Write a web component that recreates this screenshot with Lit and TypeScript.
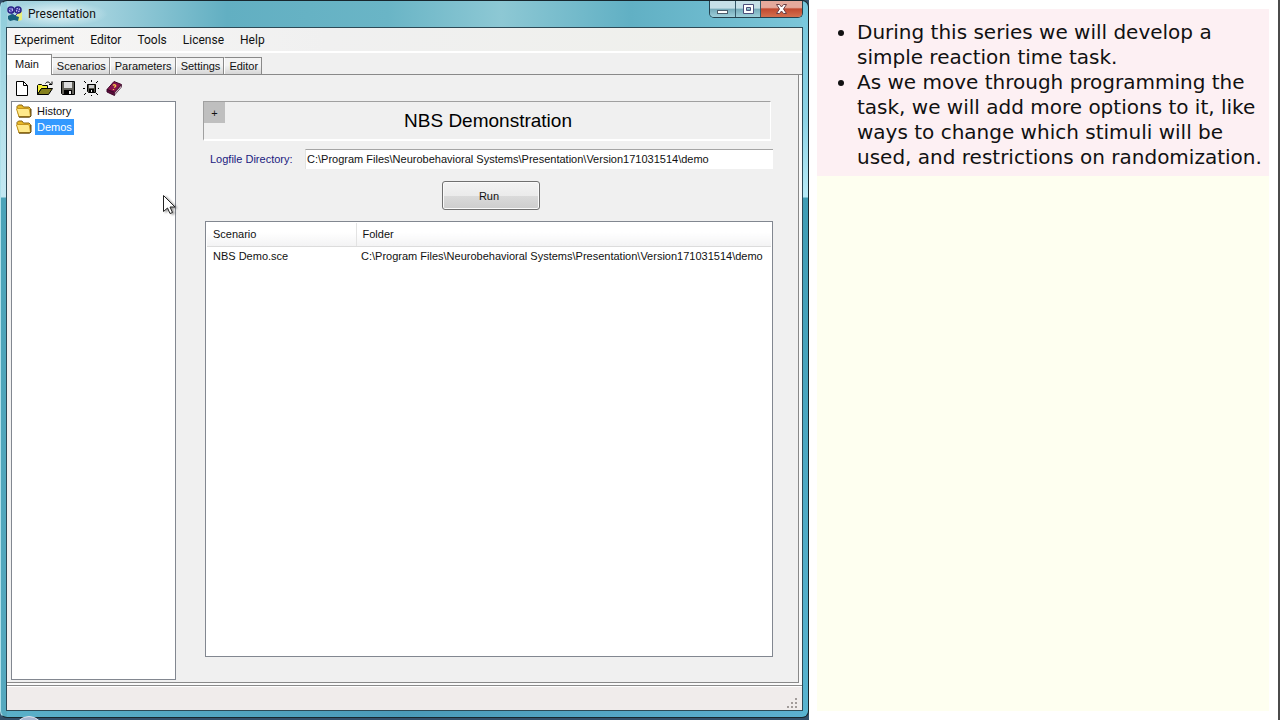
import { LitElement, html, css, svg } from "lit";
import { customElement, state } from "lit/decorators.js";
import { classMap } from "lit/directives/class-map.js";

const folderPath = "C:\\Program Files\\Neurobehavioral Systems\\Presentation\\Version171031514\\demo";

const newIcon = svg`<path d="M2.5 1.5h7l4 4v10h-11z" fill="#fff" stroke="#000"/><path d="M9.5 1.5v4h4" fill="none" stroke="#000"/>`;
const openIcon = svg`<path d="M.5 14.5v-9l1-1h3l1 1h5v3h-6z" fill="#f4f03c" stroke="#000"/><path d="M.5 14.5l4-6h11l-4 6z" fill="#85801c" stroke="#000"/><path d="M8.500 3.500c1-2 4-2 5 .5m1.500-2.500v3h-3" fill="none" stroke="#000"/>`;
const saveIcon = svg`<path d="M1.500 1.500h13v13h-12l-1-1z" fill="#62615a" stroke="#000"/><path d="M4 2h8v6H4z" fill="#dcdcdc"/><path d="M4 10h8v5H4z" fill="#000"/><path d="M9 11h2v3H9z" fill="#eee"/>`;
const saveAllIcon = svg`<path d="M4.500 4.500h8v8h-7l-1-1z" fill="#55544a" stroke="#000"/><path d="M6 5h5v3H6z" fill="#ccc"/><path d="M6 9h5v4H6z" fill="#000"/><path d="M8 10h1v2H8z" fill="#eee"/><path d="M8.500 0v2M8.500 15v1M0 8.500h2M15 8.500h1M1 1l2 2M15 1l-2 2M1 15l2-2M15 15l-2-2" stroke="#000" fill="none"/>`;
const bookIcon = svg`<path d="M1 9.500L8 1.500l7.500 3-7 8z" fill="#86144c" stroke="#3b0828"/><path d="M1 9.500l7.500 3v3L1 12z" fill="#5b0a3a" stroke="#3b0828"/><path d="M8.500 13l7-8v2l-7 8z" fill="#f2e6ea" stroke="#3b0828" stroke-width=".7"/><path d="M7 5.500c1-1.500 3.500-.5 2.500 1L8 7.500M7.500 9v1" fill="none" stroke="#f3c84a" stroke-width="1.300"/>`;

@customElement("tool-icon")
export class ToolIcon extends LitElement {
  static properties = { shape: { attribute: false } };
  declare shape: unknown;
  static styles = css`
    :host { display: block; width: 16px; height: 16px; }
    svg { display: block; width: 100%; height: 100%; }
  `;
  render() {
    return html`<svg viewBox="0 0 16 16" aria-hidden="true">${this.shape}</svg>`;
  }
}

@customElement("app-root")
export class AppRoot extends LitElement {
  @state() private selected = "Demos";

  private menus = ["Experiment", "Editor", "Tools", "License", "Help"];
  private tabs = ["Main", "Scenarios", "Parameters", "Settings", "Editor"];
  private tools = [
    { name: "New", shape: newIcon },
    { name: "Open", shape: openIcon },
    { name: "Save", shape: saveIcon },
    { name: "Save all", shape: saveAllIcon },
    { name: "Help", shape: bookIcon },
  ];

  static styles = css`
    :host {
      display: grid;
      grid-template-columns: minmax(0, 809fr) minmax(0, 471fr);
      height: 100vh;
      position: relative;
      overflow: hidden;
      font-family: "Liberation Sans", Arial, sans-serif;
      font-size: 11px;
      line-height: 16px;
      color: #111;
    }
    * { box-sizing: border-box; }
    button, input {
      font: inherit;
      color: inherit;
      margin: 0;
      padding: 0;
      border: 0;
      border-radius: 0;
      background: none;
    }
    .desktop { display: flex; flex-direction: column; background: #34506a; padding-bottom: 2px; min-height: 0; overflow: hidden; }
    .window {
      flex: 1;
      min-height: 0;
      display: flex;
      flex-direction: column;
      border: 1px solid #17262d;
      border-left-color: #aee0ea;
      border-radius: 7px;
      padding: 0 5px 6px;
      background:
        linear-gradient(#8ccbd9 0, #b7e2ec 130px, #c3e8f2 196px, #4ba3b8 197px, #55a9bf 100%) left / 6px 100% no-repeat,
        linear-gradient(#74c6dc 0, #8ed4e6 120px, #b8ebf7 196px, #3f9db5 197px, #58b4d0 100%) right / 6px 100% no-repeat,
        linear-gradient(90deg, #a5d3df 0, #a3d2de 12%, #62afc2 28%, #6ab5c6 48%, #8dc8d4 62%, #61b0c4 78%, #7cc6d9 100%) top / 100% 30px no-repeat,
        linear-gradient(90deg, #5ab0c9, #4a9ab8 50%, #5cb0d0);
    }
    .titlebar { flex: none; height: 26px; display: flex; justify-content: space-between; align-items: flex-start; }
    .caption {
      display: flex;
      align-items: center;
      gap: 5px;
      height: 26px;
      padding: 0 12px 0 1px;
      font-family: Roboto, "Open Sans", sans-serif;
      font-size: 12px;
      background: radial-gradient(closest-side, #d3ebf1 30%, transparent);
    }
    .logo { width: 16px; height: 16px; }
    .controls { display: flex; height: 17px; border: 1px solid #25424f; border-top: 0; border-radius: 0 0 5px 5px; overflow: hidden; }
    .control { width: 25px; display: grid; place-items: center; background: linear-gradient(#c5dfe7 45%, #74a9b8 50%, #9ecfda); }
    .control + .control { border-left: 1px solid #35596a; }
    .control.close { width: 42px; background: linear-gradient(#e5aa9c 40%, #c14a30 50%, #d4704e); }
    .control svg { width: 13px; height: 12px; display: block; }
    .client { flex: 1; min-height: 0; display: flex; flex-direction: column; border: 1px solid #2c4a57; background: #fafafa; }
    .menubar {
      flex: none;
      display: flex;
      gap: 16px;
      height: 25px;
      padding: 1px 7px 0;
      border-bottom: 2px solid #fff;
      background: linear-gradient(90deg, #f7f6f5, #f0f0f0 40%, #eff0eb);
      font-family: Roboto, "Open Sans", sans-serif;
      font-size: 12px;
    }
    .tabs { flex: none; display: flex; align-items: flex-end; height: 22px; padding-top: 1px; border-bottom: 1px solid #898989; background: #f0f0f0; }
    .tab {
      height: 17px;
      padding: 0 3px 0 4px;
      border: 1px solid #898989;
      border-left: 1px solid #fff;
      border-bottom: 0;
      background: linear-gradient(#f3f3f3 45%, #d6d6d6);
      white-space: nowrap;
    }
    .tab.active { height: 21px; margin-bottom: -1px; padding: 0 12px 2px 7px; background: #fff; }
    .page { flex: 1; min-height: 0; display: flex; margin-right: 3px; border: 1px solid #898989; border-width: 0 1px 1px 0; background: #f0f0f0; }
    .side { flex: none; width: 169px; display: flex; flex-direction: column; padding: 0 0 2px 4px; }
    .toolbar { flex: none; display: flex; gap: 7px; height: 26px; padding: 5px 3px; }
    .tree { flex: 1; margin: 0; padding: 1px 4px; list-style: none; border: 1px solid #828790; background: #fff; }
    .node { display: flex; align-items: center; gap: 3px; width: 100%; height: 16px; }
    .node svg { width: 16px; height: 14px; }
    .node span { padding: 0 2px; }
    .node.chosen span { background: #3399ff; color: #fff; }
    .content { flex: 1; min-width: 0; display: flex; flex-direction: column; padding: 26px 25px 25px 27px; }
    .heading { flex: none; display: grid; grid-template-columns: 22px 1fr; height: 40px; margin-right: 2px; border: 1px solid #a0a0a0; border-right-color: #fff; border-bottom: 2px solid #fff; }
    .expand { width: 21px; height: 21px; background: #bfbfbf; }
    h1 { margin: 0; padding-right: 20px; align-self: center; text-align: center; font-size: 19px; line-height: 24px; font-weight: 400; color: #000; }
    .logfile { flex: none; display: flex; align-items: center; margin-top: 8px; padding-left: 7px; }
    .logfile label { width: 95px; color: #1a1a80; }
    .logfile input { flex: 1; min-width: 0; height: 20px; padding: 0 1px 1px; border-top: 1px solid #a5a5a5; border-left: 1px solid #e2e3e0; background: #fff; }
    .run {
      flex: none;
      align-self: center;
      width: 98px;
      height: 29px;
      margin: 12px 0 11px 6px;
      padding-right: 4px;
      border: 1px solid #707070;
      border-radius: 3px;
      box-shadow: inset 0 0 0 1px #fafafa;
      background: linear-gradient(#f3f3f3 0, #ebebeb 50%, #dadada 52%, #cdcdcd);
    }
    .list { flex: 1; min-height: 0; margin-left: 2px; padding: 1px; border: 1px solid #828790; background: #fff; overflow: hidden; }
    table { width: 100%; border-collapse: collapse; table-layout: fixed; }
    th, td { height: 23px; padding: 0 6px; text-align: left; font-weight: 400; white-space: nowrap; }
    td { height: 20px; padding: 0 5px; }
    td:first-child { padding-left: 6px; }
    th { border-bottom: 1px solid #dcdcdc; background: linear-gradient(#fff 40%, #f3f3f4); }
    .name { width: 149px; border-right: 1px solid #e3e3e3; }
    .status { flex: none; height: 25px; margin-top: 2px; padding: 1px 4px; border-top: 1px solid #8a8a8a; background: #f0eceb; box-shadow: inset 0 1px #fff; display: flex; align-items: flex-end; justify-content: flex-end; }
    .grip { width: 12px; height: 12px; display: block; }
    .notes { border-right: 2px solid #4b4b4b; background: #fff; padding: 9px 9px 9px 8px; display: flex; min-width: 0; }
    .paper { flex: 1; min-width: 0; background: #fefff0; }
    .notes ul {
      margin: 0;
      padding: 11px 0 6px 40px;
      background: #fdf0f3;
      font-family: "DejaVu Sans", Verdana, sans-serif;
      font-size: 20px;
      line-height: 25px;
      color: #111;
    }
    .orb { position: absolute; left: 14px; bottom: -26px; width: 30px; height: 30px; border-radius: 50%; background: #a9b5d0; border: 1px solid #dfe6f0; }
    .pointer { position: absolute; left: 163px; top: 195px; width: 14px; height: 20px; filter: drop-shadow(2px 1px 1px #0006); }
  `;

  private folder() {
    return html`<svg viewBox="0 0 16 14" aria-hidden="true">
      <path d="M1 4V2.500L2.500 1H6l1.500 2H13l1.500 1.500V12L13 13H3z" fill="#e9b824" stroke="#8b6716"/>
      <path d="M.500 5l1-.5H12l1.500 1 1 7H3z" fill="#ffe98a" stroke="#c4951d"/>
      <path d="M3 13h11l1-1V5" fill="none" stroke="#5c4510"/>
    </svg>`;
  }

  render() {
    return html`
      <main class="desktop">
        <section class="window">
          <header class="titlebar">
            <div class="caption">
              <svg class="logo" viewBox="0 0 16 16" aria-hidden="true">
                <path d="M9 9l4-4 2 1v8l-4 1z" fill="#e7ee7c"/>
                <circle cx="4" cy="4" r="3" fill="#b9b4ee" stroke="#282184" stroke-width="1.500"/>
                <circle cx="11" cy="4" r="3" fill="#b9b4ee" stroke="#282184" stroke-width="1.500"/>
                <path d="M2 3l4 3M4 1v6M9 3l4 2M12 1l-2 6M4 7l4 3 3-3" stroke="#3c32a4" fill="none"/>
                <path d="M1 10l4-2 4 2 3 1-1 4-4-1-4 1-2-2z" fill="#17617c"/>
              </svg>
              <span>Presentation</span>
            </div>
            <div class="controls">
              <button class="control" aria-label="Minimize"><svg viewBox="0 0 13 12"><rect x="1.500" y="7.500" width="10" height="3" fill="#fff" stroke="#4b5d6b"/></svg></button>
              <button class="control" aria-label="Maximize"><svg viewBox="0 0 13 12"><path d="M1.500 1.500h10v9h-10zM4.500 4.500v3h4v-3z" fill="#fff" fill-rule="evenodd" stroke="#4b4f7b"/></svg></button>
              <button class="control close" aria-label="Close"><svg viewBox="0 0 13 12"><path d="M1.500 1.500h3l2 2.500 2-2.500h3L8.500 6l3 4.500h-3l-2-2.500-2 2.500h-3L4.500 6z" fill="#fff" stroke="#6b4045"/></svg></button>
            </div>
          </header>
          <div class="client">
            <nav class="menubar">${this.menus.map((m) => html`<button>${m}</button>`)}</nav>
            <div class="tabs" role="tablist">
              ${this.tabs.map((t, i) => html`<button role="tab" aria-selected=${i === 0} class=${classMap({ tab: true, active: i === 0 })}>${t}</button>`)}
            </div>
            <div class="page">
              <div class="side">
                <div class="toolbar">
                  ${this.tools.map((t) => html`<button aria-label=${t.name}><tool-icon .shape=${t.shape}></tool-icon></button>`)}
                </div>
                <ul class="tree">
                  ${["History", "Demos"].map((n) => html`<li>
                    <button class=${classMap({ node: true, chosen: n === this.selected })} @click=${() => (this.selected = n)}>${this.folder()}<span>${n}</span></button>
                  </li>`)}
                </ul>
              </div>
              <div class="content">
                <div class="heading">
                  <button class="expand">+</button>
                  <h1>NBS Demonstration</h1>
                </div>
                <div class="logfile">
                  <label for="logdir">Logfile Directory:</label>
                  <input id="logdir" type="text" .value=${folderPath} />
                </div>
                <button class="run">Run</button>
                <div class="list">
                  <table>
                    <thead><tr><th class="name">Scenario</th><th>Folder</th></tr></thead>
                    <tbody><tr><td>NBS Demo.sce</td><td>${folderPath}</td></tr></tbody>
                  </table>
                </div>
              </div>
            </div>
            <footer class="status">
              <svg class="grip" viewBox="0 0 12 12" aria-hidden="true"><path d="M9 1h2v2H9zM9 5h2v2H9zM9 9h2v2H9zM5 5h2v2H5zM5 9h2v2H5zM1 9h2v2H1z" fill="#a29c9a"/></svg>
            </footer>
          </div>
        </section>
      </main>
      <aside class="notes">
        <div class="paper">
          <ul>
            <li>During this series we will develop a simple reaction time task.</li>
            <li>As we move through programming the task, we will add more options to it, like ways to change which stimuli will be used, and restrictions on randomization.</li>
          </ul>
        </div>
      </aside>
      <div class="orb"></div>
      <svg class="pointer" viewBox="0 0 14 20" aria-hidden="true"><path d="M.500.500v16l4-3.500 2.500 5.500 2.500-1L7 12h5z" fill="#fff" stroke="#222"/></svg>
    `;
  }
}
